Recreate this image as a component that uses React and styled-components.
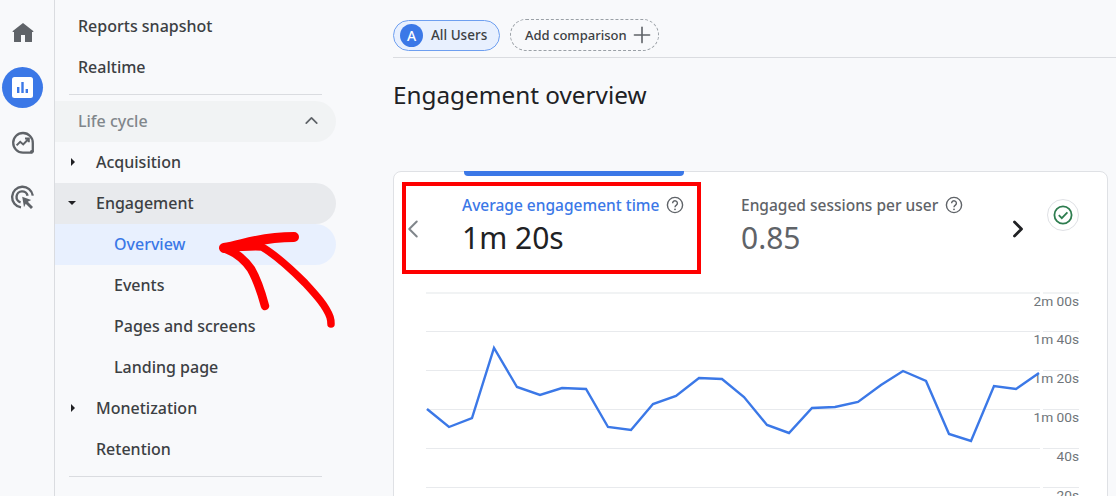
import styled, { createGlobalStyle } from 'styled-components';
import { ChevronUp, ChevronLeft, ChevronRight, Plus } from 'lucide-react';

const GlobalStyle = createGlobalStyle`
	html, body {
		margin: 0;
		padding: 0;
		background: #f8f9fb;
		font-family: 'Noto Sans', Roboto, sans-serif;
		color: #202124;
	}
	* {
		box-sizing: border-box;
	}
`;

const navItems = [
	{ label: 'Reports snapshot', level: 0 },
	{ label: 'Realtime', level: 0 },
	{ divider: true },
	{ label: 'Life cycle', kind: 'section' },
	{ label: 'Acquisition', level: 1, caret: 'closed' },
	{ label: 'Engagement', level: 1, caret: 'open', kind: 'open' },
	{ label: 'Overview', level: 2, kind: 'active' },
	{ label: 'Events', level: 2 },
	{ label: 'Pages and screens', level: 2 },
	{ label: 'Landing page', level: 2 },
	{ label: 'Monetization', level: 1, caret: 'closed' },
	{ label: 'Retention', level: 1 },
	{ divider: true },
];

const axisLabels = ['2m 00s', '1m 40s', '1m 20s', '1m 00s', '40s', '20s'];

const chartPoints = [
	[427, 409], [449, 427], [472, 418], [494, 348], [517, 387], [540, 395],
	[562, 388], [586, 389], [608, 427], [631, 430], [653, 404], [676, 396],
	[699, 378], [722, 379], [744, 397], [767, 425], [789, 433], [812, 408],
	[835, 407], [858, 402], [881, 385], [903, 371], [926, 381], [949, 434],
	[971, 441], [994, 386], [1016, 389], [1039, 373],
];

const App = () => {
	return (
		<>
			<GlobalStyle />
			<Page>
				<Rail>
					<RailIcon>
						<svg width="24" height="24" viewBox="0 0 24 24" fill="#5f6368">
							<path d="M10 21v-7h4v7h6.4a.6.6 0 0 0 .6-.6V11h.8c.6 0 .8-.6.4-1L12 2 1.8 10c-.4.4-.2 1 .4 1H3v9.4c0 .4.2.6.6.6z" />
						</svg>
					</RailIcon>
					<RailIcon $active>
						<svg width="21" height="21" viewBox="0 0 21 21">
							<rect width="21" height="21" rx="2.5" fill="#fff" />
							<path d="M5 10h2.4v6H5zM9.3 5h2.4v11H9.3zM13.6 12H16v4h-2.4z" fill="#3b78e7" />
						</svg>
					</RailIcon>
					<RailIcon>
						<svg width="24" height="24" viewBox="0 0 24 24" fill="none" stroke="#5f6368">
							<path d="M21.6 21.6H12A9.8 9.8 0 1 1 21.8 12v9.6" strokeWidth="2.3" />
							<path d="M5.6 14.4l3.6-3.6 3 2.6 5-5.2M14 7.6h3.8v3.6" strokeWidth="2" />
							<circle cx="20.6" cy="20.6" r="1.6" fill="#5f6368" stroke="none" />
						</svg>
					</RailIcon>
					<RailIcon>
						<svg width="26" height="26" viewBox="0 0 26 26" fill="none" stroke="#5f6368">
							<path d="M11 22.4A10.4 10.4 0 1 1 22.8 10.6" strokeWidth="2.4" />
							<path d="M10.6 17.4A5.6 5.6 0 1 1 17.6 10.8" strokeWidth="2.4" />
							<path d="M12.2 11.8l9 3.2-3.4 1.7 5.2 5.3-2 2-5.3-5.2-1.7 3.4z" fill="#5f6368" stroke="none" />
						</svg>
					</RailIcon>
				</Rail>

				<Sidebar>
					{navItems.map((item, i) =>
						item.divider ? (
							<NavDivider key={i} />
						) : (
							<NavItem key={item.label} $level={item.level} $kind={item.kind}>
								{item.caret && <Caret $open={item.caret === 'open'} />}
								{item.label}
								{item.kind === 'section' && (
									<SectionToggle>
										<ChevronUp size={21} strokeWidth={2} />
									</SectionToggle>
								)}
							</NavItem>
						),
					)}
				</Sidebar>

				<Main>
					<Toolbar>
						<UserChip>
							<Avatar>A</Avatar>
							All Users
						</UserChip>
						<AddChip>
							Add comparison
							<Plus size={26} strokeWidth={1.5} color="#5f6368" />
						</AddChip>
					</Toolbar>
					<Title>Engagement overview</Title>

					<Card>
						<TabIndicator />
						<TabBar>
							<TabArrow $muted>
								<ChevronLeft size={30} strokeWidth={1.6} />
							</TabArrow>
							<Tab $width={279}>
								<TabLabel $active>
									Average engagement time <HelpIcon />
								</TabLabel>
								<TabValue $active>1m 20s</TabValue>
							</Tab>
							<Tab $width={260}>
								<TabLabel>
									Engaged sessions per user <HelpIcon />
								</TabLabel>
								<TabValue>0.85</TabValue>
							</Tab>
							<TabArrow>
								<ChevronRight size={28} strokeWidth={2.4} />
							</TabArrow>
							<CheckBadge>
								<svg width="20" height="20" viewBox="0 0 20 20" fill="none" stroke="#2e7d4f">
									<circle cx="10" cy="10" r="8.6" strokeWidth="1.8" />
									<path d="M5.8 10.2l3 3 5.6-5.8" strokeWidth="1.8" />
								</svg>
							</CheckBadge>
						</TabBar>
						<RedBox />

						<Chart>
							{axisLabels.map((label, i) => (
								<GridRow key={label}>
									<GridRule>
										<RuleLine $first={i === 0} />
										<RuleTick $first={i === 0} />
									</GridRule>
									<AxisLabel>{label}</AxisLabel>
								</GridRow>
							))}
							<ChartLine width="652" height="200" viewBox="426 292 652 200">
								<polyline
									points={chartPoints.map((p) => p.join(',')).join(' ')}
									fill="none"
									stroke="#3b78e7"
									strokeWidth="2.4"
								/>
							</ChartLine>
						</Chart>
					</Card>
				</Main>

				<Annotation width="1116" height="496" viewBox="0 0 1116 496" fill="none" stroke="#fe0000" strokeLinecap="round" strokeLinejoin="round">
					<path d="M294 237C278 237 258 240 242 244C234 246 230 247 224 248" strokeWidth="10" />
					<path d="M226 249C234 252 244 259 251 269C258 281 262 295 265 306" strokeWidth="8.5" />
					<path d="M228 248C240 248 250 246 262 247C274 254 290 268 305 283C317 296 326 306 330 317C331 320 331 322 331 324" strokeWidth="7.5" />
				</Annotation>
			</Page>
		</>
	);
};

const HelpIcon = () => (
	<svg width="18" height="18" viewBox="0 0 18 18" fill="none" stroke="#5f6368">
		<circle cx="9" cy="9" r="7.6" strokeWidth="1.4" />
		<path d="M6.6 7.2A2.4 2.4 0 1 1 10.4 9.1C9.4 9.8 9 10.2 9 11.3" strokeWidth="1.4" />
		<circle cx="9" cy="13.3" r="0.9" fill="#5f6368" stroke="none" />
	</svg>
);

const Page = styled.div`
	position: relative;
	display: flex;
	width: 1116px;
	height: 496px;
	overflow: hidden;
	background: #f8f9fb;
`;

const Rail = styled.nav`
	flex: 0 0 55px;
	display: flex;
	flex-direction: column;
	align-items: center;
	gap: 14px;
	padding: 12px 9px 0 0;
	border-right: 1px solid #dadce0;
`;

const RailIcon = styled.div`
	flex: 0 0 41px;
	width: 41px;
	height: 41px;
	display: flex;
	align-items: center;
	justify-content: center;
	border-radius: 50%;
	background: ${(p) => (p.$active ? '#3b78e7' : 'transparent')};
`;

const Sidebar = styled.aside`
	flex: 0 0 281px;
	padding-top: 6px;
`;

const navPadding = { 0: 23, 1: 41, 2: 59 };

const navBackground = {
	section: '#f1f3f4',
	open: '#e8eaed',
	active: '#e8f0fe',
};

const navColor = {
	section: '#80868b',
	active: '#3b78e7',
};

const NavItem = styled.div`
	position: relative;
	display: flex;
	align-items: center;
	height: 41px;
	padding-left: ${(p) => (p.$kind === 'section' ? 23 : navPadding[p.$level])}px;
	padding-bottom: 2px;
	border-radius: 0 21px 21px 0;
	font-size: 16px;
	font-weight: 500;
	color: ${(p) => navColor[p.$kind] || '#3c4043'};
	background: ${(p) => navBackground[p.$kind] || 'transparent'};
`;

const NavDivider = styled.hr`
	height: 1px;
	margin: 6px 14px;
	border: none;
	background: #dadce0;
`;

const Caret = styled.span`
	position: absolute;
	left: ${(p) => (p.$open ? 13 : 16)}px;
	top: ${(p) => (p.$open ? 18 : 16)}px;
	width: 0;
	height: 0;
	border-style: solid;
	border-color: transparent;
	${(p) =>
		p.$open
			? `
		border-width: 4px 4px 0 4px;
		border-top-color: #202124;
	`
			: `
		border-width: 4px 0 4px 4px;
		border-left-color: #202124;
	`}
`;

const SectionToggle = styled.span`
	display: flex;
	margin-left: auto;
	margin-right: 14px;
	color: #5f6368;
`;

const Main = styled.main`
	flex: 1;
	min-width: 0;
	margin-left: 57px;
`;

const Toolbar = styled.div`
	display: flex;
	align-items: center;
	gap: 10px;
	height: 58px;
	padding-top: 13px;
	border-bottom: 1px solid #dadce0;
`;

const UserChip = styled.div`
	display: flex;
	align-items: center;
	gap: 8px;
	width: 107px;
	height: 31px;
	padding-left: 6px;
	border: 1.5px solid #6e9ff0;
	border-radius: 16px;
	background: #e8f0fe;
	font-size: 13.5px;
	font-weight: 500;
	color: #3c4043;
`;

const Avatar = styled.span`
	display: flex;
	align-items: center;
	justify-content: center;
	width: 23px;
	height: 23px;
	border-radius: 50%;
	background: #3b78e7;
	color: #fff;
	font-size: 14px;
	font-weight: 500;
`;

const AddChip = styled.div`
	display: flex;
	align-items: center;
	justify-content: space-between;
	width: 149px;
	height: 32px;
	padding: 0 3px 0 14px;
	border: 1.3px dashed #9aa0a6;
	border-radius: 16px;
	font-size: 13px;
	font-weight: 500;
	color: #3c4043;
`;

const Title = styled.h1`
	height: 36px;
	margin: 19px 0 0 0;
	font-size: 24.3px;
	font-weight: 400;
	line-height: 36px;
	color: #202124;
`;

const Card = styled.section`
	position: relative;
	margin: 58px 8px 0 0;
	height: 340px;
	border: 1px solid #dfe1e5;
	border-radius: 8px 8px 0 0;
	background: #fff;
`;

const TabIndicator = styled.div`
	position: absolute;
	top: -1px;
	left: 70px;
	width: 220px;
	height: 5px;
	border-radius: 0 0 4px 4px;
	background: #3b78e7;
`;

const TabBar = styled.div`
	display: flex;
	align-items: flex-start;
	height: 120px;
	padding: 23px 0 0 4px;
`;

const TabArrow = styled.div`
	display: flex;
	justify-content: center;
	flex: 0 0 ${(p) => (p.$muted ? 64 : 34)}px;
	padding: ${(p) => (p.$muted ? '19px 34px 0 0' : '20px 0 0 0')};
	color: ${(p) => (p.$muted ? '#80868b' : '#202124')};
`;

const Tab = styled.div`
	flex: 0 0 ${(p) => p.$width}px;
`;

const TabLabel = styled.div`
	display: flex;
	align-items: center;
	gap: 7px;
	height: 20px;
	font-size: 15.5px;
	font-weight: 500;
	white-space: nowrap;
	color: ${(p) => (p.$active ? '#3b78e7' : '#5f6368')};
`;

const TabValue = styled.div`
	margin-top: 3px;
	font-size: 30px;
	font-weight: 400;
	line-height: 40px;
	color: ${(p) => (p.$active ? '#202124' : '#5f6368')};
`;

const CheckBadge = styled.div`
	display: flex;
	align-items: center;
	justify-content: center;
	width: 32px;
	height: 32px;
	margin: 4px 0 0 12px;
	border: 1px solid #dfe1e5;
	border-radius: 50%;
`;

const RedBox = styled.div`
	position: absolute;
	top: 10px;
	left: 8px;
	width: 299px;
	height: 92px;
	border: 4px solid #fe0000;
`;

const Chart = styled.div`
	position: relative;
	margin: 0 28px 0 32px;
`;

const GridRow = styled.div`
	height: 39px;
`;

const GridRule = styled.div`
	display: flex;
	gap: 3px;
`;

const RuleLine = styled.span`
	flex: 0 0 614px;
	height: ${(p) => (p.$first ? 2 : 1)}px;
	background: ${(p) => (p.$first ? '#f1f3f4' : '#e8eaed')};
`;

const RuleTick = styled(RuleLine)`
	flex: 1;
`;

const AxisLabel = styled.div`
	margin-top: -1px;
	font-family: Roboto, sans-serif;
	font-size: 13.7px;
	line-height: 16px;
	text-align: right;
	color: #70757a;
`;

const ChartLine = styled.svg`
	position: absolute;
	top: 0;
	left: 0;
`;

const Annotation = styled.svg`
	position: absolute;
	top: 0;
	left: 0;
	pointer-events: none;
`;

export default App;
